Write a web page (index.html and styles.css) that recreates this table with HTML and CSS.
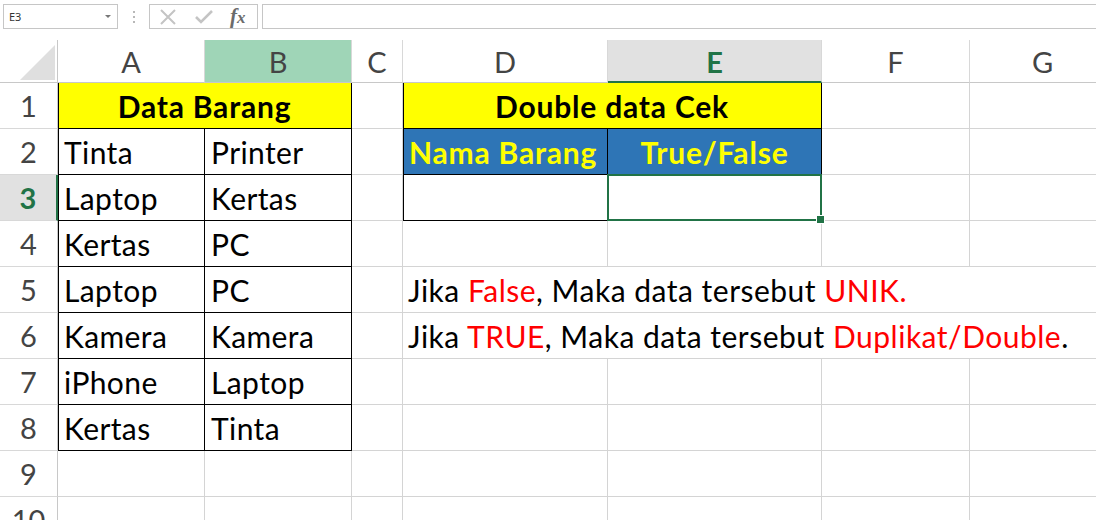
FILE: index.html
```html
<!DOCTYPE html>
<html>
<head>
<meta charset="utf-8">
<title>Double data Cek</title>
<link rel="stylesheet" href="styles.css">
</head>
<body>
<div class="topbar">
  <div class="namebox"><span class="ref">E3</span><span class="caret"></span></div>
  <div class="dots"><i></i><i></i><i></i></div>
  <div class="fxbox">
    <svg class="ic" width="18" height="16" viewBox="0 0 18 16"><path d="M2 1 L16 15 M16 1 L2 15" stroke="#c4c4c4" stroke-width="2" fill="none"/></svg>
    <svg class="ic" width="18" height="14" viewBox="0 0 18 14"><path d="M1 7 L6 12 L17 1" stroke="#c4c4c4" stroke-width="2.6" fill="none"/></svg>
    <span class="fx">f<span class="fxx">x</span></span>
  </div>
  <div class="formula"></div>
</div>

<div class="sheet">
  <div class="corner"><svg width="58" height="43" viewBox="0 0 58 43"><polygon points="20,40 55,40 55,5" fill="#dfdfdf"/></svg></div>
  <div class="ch">A</div>
  <div class="ch ch-hl">B</div>
  <div class="ch">C</div>
  <div class="ch">D</div>
  <div class="ch ch-act">E</div>
  <div class="ch">F</div>
  <div class="ch">G</div>

  <div class="rh">1</div>
  <div class="c t-l t-r span2 yellow bold center">Data Barang</div>
  <div class="c"></div>
  <div class="c d-l d-r span2 yellow bold center">Double data Cek</div>
  <div class="c"></div>
  <div class="c"></div>

  <div class="rh">2</div>
  <div class="c t-l t-r">Tinta</div>
  <div class="c t-r">Printer</div>
  <div class="c"></div>
  <div class="c d-l d-r blue bold">Nama Barang</div>
  <div class="c d-r blue bold center">True/False</div>
  <div class="c"></div>
  <div class="c"></div>

  <div class="rh rh-act">3</div>
  <div class="c t-l t-r">Laptop</div>
  <div class="c t-r">Kertas</div>
  <div class="c"></div>
  <div class="c d-l d-r"></div>
  <div class="c d-r sel"></div>
  <div class="c"></div>
  <div class="c"></div>

  <div class="rh">4</div>
  <div class="c t-l t-r">Kertas</div>
  <div class="c t-r">PC</div>
  <div class="c"></div>
  <div class="c"></div>
  <div class="c"></div>
  <div class="c"></div>
  <div class="c"></div>

  <div class="rh">5</div>
  <div class="c t-l t-r">Laptop</div>
  <div class="c t-r">PC</div>
  <div class="c"></div>
  <div class="c span4 note">Jika <span class="red">False</span>, Maka data tersebut <span class="red">UNIK.</span></div>

  <div class="rh">6</div>
  <div class="c t-l t-r">Kamera</div>
  <div class="c t-r">Kamera</div>
  <div class="c"></div>
  <div class="c span4 note">Jika <span class="red">TRUE</span>, Maka data tersebut <span class="red">Duplikat/Double</span>.</div>

  <div class="rh">7</div>
  <div class="c t-l t-r">iPhone</div>
  <div class="c t-r">Laptop</div>
  <div class="c"></div>
  <div class="c"></div>
  <div class="c"></div>
  <div class="c"></div>
  <div class="c"></div>

  <div class="rh">8</div>
  <div class="c t-l t-r">Kertas</div>
  <div class="c t-r">Tinta</div>
  <div class="c"></div>
  <div class="c"></div>
  <div class="c"></div>
  <div class="c"></div>
  <div class="c"></div>

  <div class="rh">9</div>
  <div class="c"></div>
  <div class="c"></div>
  <div class="c"></div>
  <div class="c"></div>
  <div class="c"></div>
  <div class="c"></div>
  <div class="c"></div>

  <div class="rh">10</div>
  <div class="c"></div>
  <div class="c"></div>
  <div class="c"></div>
  <div class="c"></div>
  <div class="c"></div>
  <div class="c"></div>
  <div class="c"></div>
</div>
</body>
</html>
```

FILE: styles.css
```css
* { box-sizing: border-box; }
html, body { margin: 0; padding: 0; background: #fff; }
body {
  width: 1096px;
  height: 520px;
  overflow: hidden;
  font-family: "Lato", "Liberation Sans", sans-serif;
}

/* ---------- formula bar ---------- */
.topbar {
  height: 40px;
  padding-top: 4px;
  display: flex;
  align-items: flex-start;
}
.namebox {
  margin-left: 3px;
  width: 115px;
  height: 25px;
  border: 1px solid #c6c6c6;
  display: flex;
  align-items: center;
  justify-content: space-between;
  padding: 0 6px 0 5px;
}
.ref {
  font-family: "Noto Sans", "Liberation Sans", sans-serif;
  font-size: 11px;
  color: #333;
}
.caret {
  width: 0; height: 0;
  border-left: 3px solid transparent;
  border-right: 3px solid transparent;
  border-top: 3px solid #777;
}
.dots {
  width: 31px;
  height: 25px;
  display: flex;
  flex-direction: column;
  align-items: center;
  justify-content: center;
  gap: 3px;
}
.dots i {
  display: block;
  width: 2px;
  height: 2px;
  background: #b8b8b8;
}
.fxbox {
  width: 109px;
  height: 25px;
  border: 1px solid #c6c6c6;
  display: flex;
  align-items: center;
  padding-left: 9px;
  gap: 18px;
}
.ic { display: block; }
.fx {
  font-family: "Liberation Serif", "DejaVu Serif", serif;
  font-style: italic;
  font-weight: bold;
  font-size: 21px;
  color: #6b6b6b;
  margin-left: -1px;
  line-height: 1;
}
.fxx { font-size: 17px; }
.formula {
  margin-left: 4px;
  flex: 1;
  height: 25px;
  border: 1px solid #c6c6c6;
  border-right: none;
}

/* ---------- sheet grid ---------- */
.sheet {
  display: grid;
  grid-template-columns: 58px 147px 147px 51px 205px 214px 148px 146px;
  grid-template-rows: 43px repeat(10, 46px);
  width: 1116px;
}
.corner {
  border-right: 1px solid #c8c8c8;
  border-bottom: 1px solid #c8c8c8;
}
.corner svg { display: block; }
.ch {
  border-right: 1px solid #d8d8d8;
  border-bottom: 1px solid #c8c8c8;
  text-align: center;
  font-size: 29px;
  line-height: 42px;
  padding-top: 1px;
  color: #444;
}
.ch-hl { background: #9fd5b7; }
.ch-act {
  background: #e1e1e1;
  color: #217346;
  font-weight: 700;
  border-bottom: 2px solid #217346;
}
.rh {
  border-right: 1px solid #c8c8c8;
  border-bottom: 1px solid #d8d8d8;
  text-align: center;
  font-size: 29px;
  line-height: 45px;
  color: #444;
}
.rh-act {
  background: #e1e1e1;
  color: #217346;
  font-weight: 700;
  border-right: 2px solid #217346;
}
.c {
  border-right: 1px solid #d4d4d4;
  border-bottom: 1px solid #d4d4d4;
  font-size: 30px;
  line-height: 44px;
  padding-top: 1px;
  padding-left: 6px;
  color: #000;
  white-space: nowrap;
  letter-spacing: 0.4px;
}
.span2 { grid-column: span 2; }
.span4 { grid-column: span 4; }
.center { text-align: center; padding-left: 0; }
.bold { font-weight: 700; letter-spacing: 0.8px; }
.yellow { background: #ffff00; }
.blue { background: #2e75b6; color: #ffff00; }
.red { color: #ff0000; }

/* table borders */
.t-l, .d-l { box-shadow: inset 1px 0 0 #000; }
.t-r, .d-r { border-right-color: #000; border-bottom-color: #000; }
.note { padding-left: 5px; letter-spacing: 0.5px; }

/* selected cell */
.sel { position: relative; }
.sel::after {
  content: "";
  position: absolute;
  top: -1px; left: -1px; right: -1px; bottom: -1px;
  border: 2px solid #217346;
}
.sel::before {
  content: "";
  position: absolute;
  right: -4px;
  bottom: -4px;
  width: 7px;
  height: 7px;
  background: #217346;
  border: 1px solid #fff;
  z-index: 1;
}
```
